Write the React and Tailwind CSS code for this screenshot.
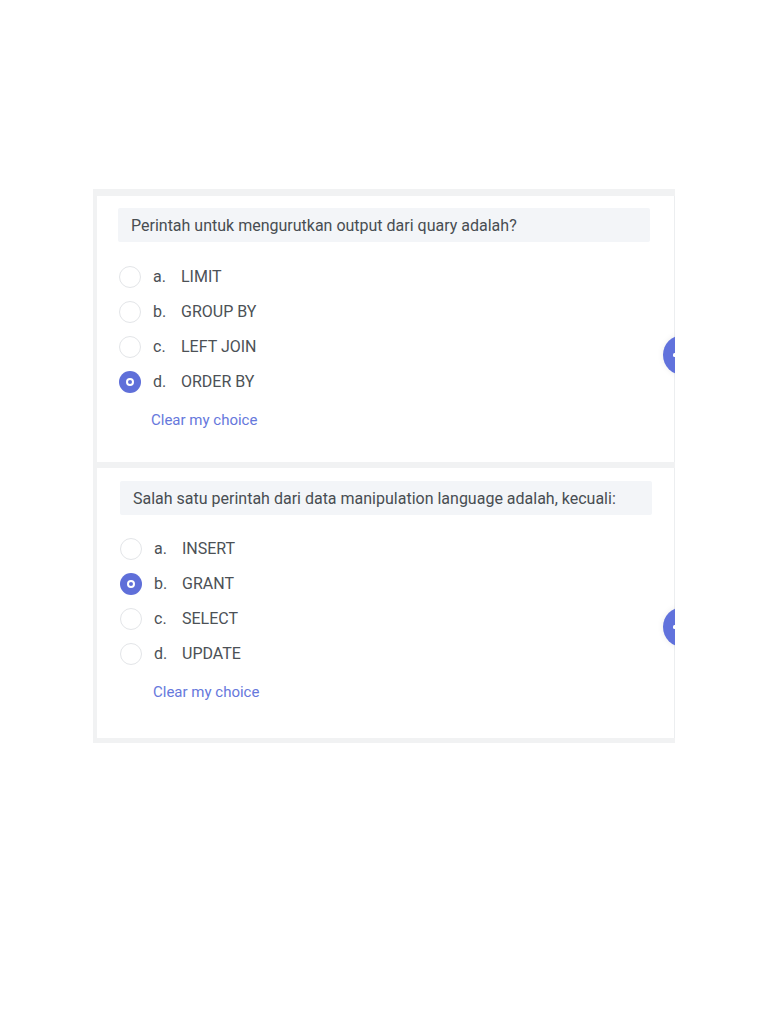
import React, { useState } from 'react'

const questions = [
  {
    id: 1,
    text: 'Perintah untuk mengurutkan output dari quary adalah?',
    options: ['LIMIT', 'GROUP BY', 'LEFT JOIN', 'ORDER BY'],
    selected: 3,
  },
  {
    id: 2,
    text: 'Salah satu perintah dari data manipulation language adalah, kecuali:',
    options: ['INSERT', 'GRANT', 'SELECT', 'UPDATE'],
    selected: 1,
  },
]

const letters = ['a.', 'b.', 'c.', 'd.']

function Radio({ checked }) {
  if (checked) {
    return (
      <span className="w-[22px] h-[22px] rounded-full bg-[#5f6fd9] flex items-center justify-center shrink-0">
        <span className="w-[8px] h-[8px] rounded-full border-[2px] border-white bg-[#5f6fd9]" />
      </span>
    )
  }
  return <span className="w-[22px] h-[22px] rounded-full border border-[#e3e5e8] bg-white shrink-0" />
}

function Question({ q, second }) {
  const [selected, setSelected] = useState(q.selected)

  return (
    <div className={`relative bg-white border-r border-[#eceef0] ${second ? 'pl-[23px] pt-[13px] h-[270px]' : 'pl-[21px] pt-[12px] h-[266px]'}`}>
      <div className="w-[532px] h-[34px] bg-[#f3f5f8] rounded-[2px] px-[13px] pt-[1px] flex items-center text-[16px] text-[#484d52]">
        {q.text}
      </div>

      <div className={`flex flex-col ${second ? 'mt-[16px]' : 'mt-[17px] ml-[1px]'}`}>
        {q.options.map((opt, i) => (
          <label
            key={opt}
            onClick={() => setSelected(i)}
            className="h-[35px] flex items-center cursor-pointer text-[16px] text-[#4c5156]"
          >
            <Radio checked={selected === i} />
            <span className="ml-[12px] w-[28px]">{letters[i]}</span>
            <span>{opt}</span>
          </label>
        ))}
      </div>

      <button
        onClick={() => setSelected(null)}
        className="mt-[11px] ml-[33px] h-[20px] text-[15px] text-[#6678dc] leading-[20px]"
      >
        Clear my choice
      </button>

      {/* floating nav button, clipped by the frame */}
      <div className="absolute left-[566px] top-[139px] w-[40px] h-[40px] rounded-full bg-[#6172dc] shadow-[0_0_6px_rgba(0,0,0,0.08)] flex items-center pl-[10px]">
        <span className="w-[3px] h-[4px] bg-white rounded-full" />
      </div>
    </div>
  )
}

export default function App() {
  return (
    <div className="min-h-screen bg-white pt-[189px] pl-[93px]" style={{ fontFamily: 'Roboto, "Noto Sans", sans-serif' }}>
      <div className="w-[582px] overflow-hidden bg-[#f1f2f3] pt-[7px] pl-[4px] pb-[5px]">
        <div className="flex flex-col gap-[6px]">
          {questions.map((q, idx) => (
            <Question key={q.id} q={q} second={idx === 1} />
          ))}
        </div>
      </div>
    </div>
  )
}
